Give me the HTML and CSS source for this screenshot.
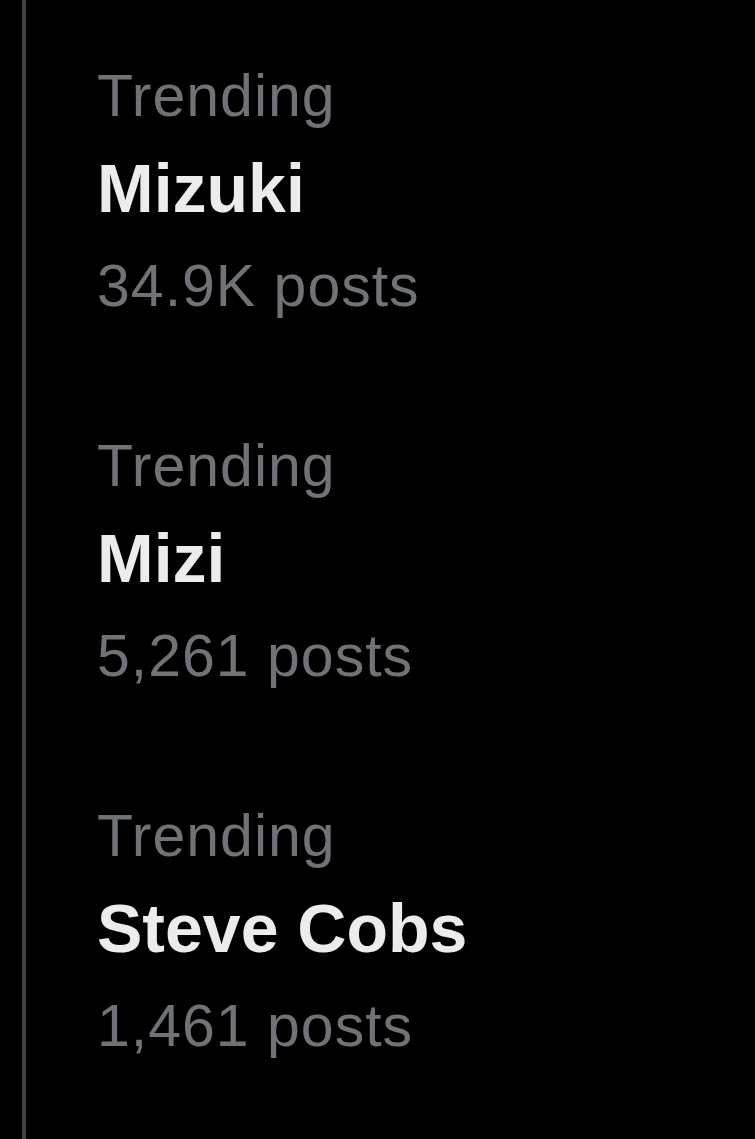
FILE: index.html
```html
<!DOCTYPE html>
<html lang="en">
<head>
<meta charset="utf-8">
<title>Trending</title>
<link rel="stylesheet" href="styles.css">
</head>
<body>
<main class="column">
  <div class="trend">
    <div class="trend-label">Trending</div>
    <div class="trend-name">Mizuki</div>
    <div class="trend-count">34.9K posts</div>
  </div>
  <div class="trend">
    <div class="trend-label">Trending</div>
    <div class="trend-name">Mizi</div>
    <div class="trend-count">5,261 posts</div>
  </div>
  <div class="trend">
    <div class="trend-label">Trending</div>
    <div class="trend-name">Steve Cobs</div>
    <div class="trend-count">1,461 posts</div>
  </div>
</main>
</body>
</html>
```

FILE: styles.css
```css
html, body {
  margin: 0;
  padding: 0;
  background: #000;
  height: 100%;
}

body {
  font-family: "Liberation Sans", Arial, sans-serif;
  overflow: hidden;
}

.column {
  margin-left: 22px;
  border-left: 4px solid #404143;
  min-height: 1139px;
  padding-left: 71px;
  padding-top: 49px;
  box-sizing: border-box;
}

.trend {
  padding-bottom: 85px;
}

.trend-label,
.trend-count {
  font-size: 59px;
  line-height: 95px;
  color: #6f7378;
  letter-spacing: 1px;
  white-space: nowrap;
}

.trend-name {
  font-size: 68px;
  font-weight: 700;
  line-height: 88px;
  color: #ececec;
  white-space: nowrap;
}

.trend-count {
  margin-top: 7px;
}
```
